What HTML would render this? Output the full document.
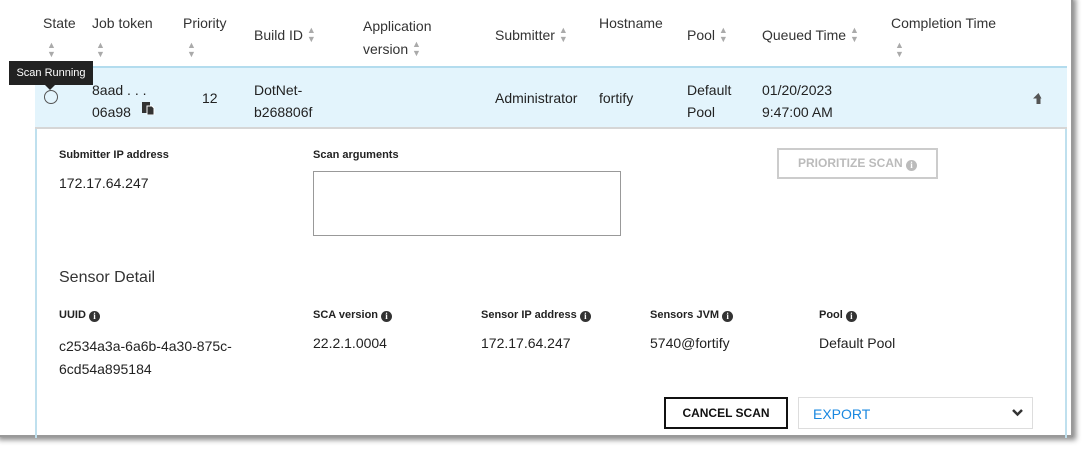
<!DOCTYPE html>
<html><head><style>
*{margin:0;padding:0;box-sizing:border-box}
body{width:1089px;height:451px;background:#fff;font-family:"Liberation Sans",sans-serif;color:#222;position:relative;overflow:hidden}
.a{position:absolute;white-space:nowrap}
.h{font-size:14px;color:#333}
.s{color:#aaa;font-size:9px;line-height:9px}
.t{font-size:14px;color:#222}
.lb{font-size:11px;font-weight:bold;color:#222}
.i{display:inline-block;width:11px;height:11px;border-radius:50%;background:#333;color:#fff;font-size:9px;line-height:11px;text-align:center;font-weight:bold;vertical-align:-1px;font-family:"Liberation Serif",serif}
</style></head><body>
<div class="a" style="left:-5px;top:-5px;width:1078px;height:442px;border-right:2px solid #999;border-bottom:2px solid #999;box-shadow:3px 3px 5px rgba(0,0,0,.45)"></div>
<div class="a" style="left:35px;top:66px;width:1032px;height:372px;border-left:2px solid #bfe0ee;border-right:2px solid #bfe0ee"></div>
<div class="a" style="left:35px;top:66px;width:1032px;height:63px;background:#e3f4fc;border-top:2px solid #b3dcee;border-bottom:2px solid #d6d6d6"></div>

<div class="a h" style="left:43px;top:15px">State</div><div class="a s" style="left:47px;top:41px">▲<br>▼</div>
<div class="a h" style="left:92px;top:15px">Job token</div><div class="a s" style="left:96px;top:41px">▲<br>▼</div>
<div class="a h" style="left:183px;top:15px">Priority</div><div class="a s" style="left:187px;top:41px">▲<br>▼</div>
<div class="a h" style="left:254px;top:26px">Build ID <span class="s" style="display:inline-block;vertical-align:-2px">▲<br>▼</span></div>
<div class="a h" style="left:363px;top:15px;line-height:23px">Application<br>version <span class="s" style="display:inline-block;vertical-align:-2px">▲<br>▼</span></div>
<div class="a h" style="left:495px;top:26px">Submitter <span class="s" style="display:inline-block;vertical-align:-2px">▲<br>▼</span></div>
<div class="a h" style="left:599px;top:15px">Hostname</div>
<div class="a h" style="left:687px;top:26px">Pool <span class="s" style="display:inline-block;vertical-align:-2px">▲<br>▼</span></div>
<div class="a h" style="left:762px;top:26px">Queued Time <span class="s" style="display:inline-block;vertical-align:-2px">▲<br>▼</span></div>
<div class="a h" style="left:891px;top:15px">Completion Time</div><div class="a s" style="left:895px;top:41px">▲<br>▼</div>

<div class="a" style="left:9px;top:61px;width:84px;height:24px;background:#222;color:#fff;font-size:11px;line-height:24px;text-align:center">Scan Running</div>
<div class="a" style="left:45px;top:85px;width:0;height:0;border-left:5px solid transparent;border-right:5px solid transparent;border-top:5px solid #222"></div>
<div class="a" style="left:44px;top:90px;width:14px;height:14px;border:1.5px solid #555;border-radius:50%"></div>

<div class="a t" style="left:92px;top:79px;line-height:22px">8aad . . .<br>06a98</div>
<svg class="a" style="left:142px;top:102px" width="13" height="13" viewBox="0 0 13 13"><rect x="0" y="0" width="8" height="11" fill="#333"/><path d="M5 4 H10 L12 6 V13 H5 Z" fill="#333" stroke="#fff" stroke-width="1"/></svg>
<div class="a t" style="left:202px;top:90px">12</div>
<div class="a t" style="left:254px;top:79px;line-height:22px">DotNet-<br>b268806f</div>
<div class="a t" style="left:495px;top:90px">Administrator</div>
<div class="a t" style="left:599px;top:90px">fortify</div>
<div class="a t" style="left:687px;top:79px;line-height:22px">Default<br>Pool</div>
<div class="a t" style="left:762px;top:79px;line-height:22px">01/20/2023<br>9:47:00 AM</div>
<svg class="a" style="left:1032px;top:92px" width="13" height="13" viewBox="0 0 13 13"><path d="M6.5 1 L12 6.5 L9.5 6.5 L9.5 6.5 M6.5 1 L1 6.5 H4.5 V12 H8.5 V6.5 H12 Z" fill="#555"/></svg>

<div class="a lb" style="left:59px;top:149px">Submitter IP address</div>
<div class="a t" style="left:59px;top:175px">172.17.64.247</div>
<div class="a lb" style="left:313px;top:149px">Scan arguments</div>
<div class="a" style="left:313px;top:171px;width:308px;height:65px;border:1px solid #999"></div>
<div class="a" style="left:777px;top:148px;width:161px;height:31px;border:2px solid #ccc;color:#bbb;font-size:12px;font-weight:bold;text-align:center;line-height:27px">PRIORITIZE SCAN <span class="i" style="background:#bbb">i</span></div>

<div class="a" style="left:59px;top:269px;font-size:16px;color:#333">Sensor Detail</div>
<div class="a lb" style="left:59px;top:309px">UUID <span class="i">i</span></div>
<div class="a t" style="left:59px;top:335px;line-height:23px">c2534a3a-6a6b-4a30-875c-<br>6cd54a895184</div>
<div class="a lb" style="left:313px;top:309px">SCA version <span class="i">i</span></div>
<div class="a t" style="left:313px;top:335px">22.2.1.0004</div>
<div class="a lb" style="left:481px;top:309px">Sensor IP address <span class="i">i</span></div>
<div class="a t" style="left:481px;top:335px">172.17.64.247</div>
<div class="a lb" style="left:650px;top:309px">Sensors JVM <span class="i">i</span></div>
<div class="a t" style="left:650px;top:335px">5740@fortify</div>
<div class="a lb" style="left:819px;top:309px">Pool <span class="i">i</span></div>
<div class="a t" style="left:819px;top:335px">Default Pool</div>

<div class="a" style="left:664px;top:397px;width:124px;height:32px;border:2px solid #111;font-size:12px;font-weight:bold;text-align:center;line-height:28px;color:#111">CANCEL SCAN</div>
<div class="a" style="left:798px;top:397px;width:235px;height:32px;border:1px solid #ddd;color:#1a88e0;font-size:14px;line-height:33px;padding-left:14px">EXPORT</div>
<svg class="a" style="left:1011px;top:408px" width="13" height="10" viewBox="0 0 13 10"><path d="M2 2 L6.5 6.5 L11 2" stroke="#333" stroke-width="2.5" fill="none"/></svg>
</body></html>
